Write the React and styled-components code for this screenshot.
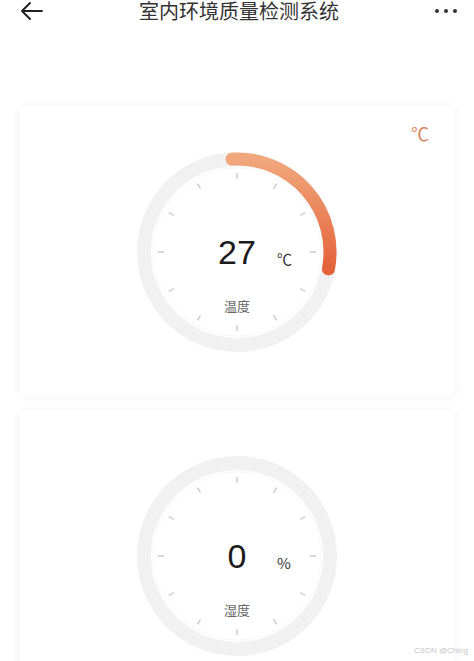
import styled, { createGlobalStyle } from "styled-components";

const GlobalStyle = createGlobalStyle`
  html, body {
    margin: 0;
    padding: 0;
    background: #fff;
    font-family: "Liberation Sans", "Noto Sans CJK SC", sans-serif;
  }
`;

const RADIUS = 93;
const CENTER = 105;

// 角度从正上方顺时针计算
function polar(deg) {
  const rad = ((deg - 90) * Math.PI) / 180;
  return [CENTER + RADIUS * Math.cos(rad), CENTER + RADIUS * Math.sin(rad)];
}

function arcPath(from, to) {
  const [x1, y1] = polar(from);
  const [x2, y2] = polar(to);
  const large = to - from > 180 ? 1 : 0;
  return `M ${x1} ${y1} A ${RADIUS} ${RADIUS} 0 ${large} 1 ${x2} ${y2}`;
}

function Ticks() {
  const ticks = [];
  for (let i = 0; i < 12; i++) {
    const rad = (i * 30 * Math.PI) / 180;
    const x1 = CENTER + 73 * Math.sin(rad);
    const y1 = CENTER - 73 * Math.cos(rad);
    const x2 = CENTER + 79 * Math.sin(rad);
    const y2 = CENTER - 79 * Math.cos(rad);
    ticks.push(<line key={i} x1={x1} y1={y1} x2={x2} y2={y2} stroke="#c8c8c8" strokeWidth="1.4" />);
  }
  return ticks;
}

function Gauge({ id, value, unit, label, endAngle }) {
  return (
    <GaugeBox>
      <svg width="210" height="210" viewBox="0 0 210 210">
        <defs>
          <linearGradient id={id} x1="0" y1="0" x2="0" y2="1">
            <stop offset="0%" stopColor="#f1a77c" />
            <stop offset="100%" stopColor="#e4623a" />
          </linearGradient>
        </defs>
        <circle cx={CENTER} cy={CENTER} r={RADIUS} fill="none" stroke="#f1f1f1" strokeWidth="14" />
        <circle cx={CENTER} cy={CENTER} r={84} fill="none" stroke="#f7f7f7" strokeWidth="1" />
        <Ticks />
        {endAngle != null && (
          <path d={arcPath(-3, endAngle)} fill="none" stroke={`url(#${id})`} strokeWidth="13" strokeLinecap="round" />
        )}
      </svg>
      <GaugeText>
        <ValueRow>
          <Value>{value}</Value>
          <Unit>{unit}</Unit>
        </ValueRow>
        <Label>{label}</Label>
      </GaugeText>
    </GaugeBox>
  );
}

function App() {
  return (
    <>
      <GlobalStyle />
      <Page>
        <Header>
          <BackIcon width="24" height="20" viewBox="0 0 24 20">
            <path d="M22 10 H2 M10 2 L2 10 L10 18" fill="none" stroke="#222" strokeWidth="2" strokeLinecap="round" strokeLinejoin="round" />
          </BackIcon>
          <Title>室内环境质量检测系统</Title>
          <MoreIcon width="24" height="6" viewBox="0 0 24 6">
            <circle cx="3" cy="3" r="2" fill="#333" />
            <circle cx="12" cy="3" r="2" fill="#333" />
            <circle cx="21" cy="3" r="2" fill="#333" />
          </MoreIcon>
        </Header>
        <Cards>
          <Card>
            <CornerUnit>℃</CornerUnit>
            <Gauge id="temp" value="27" unit="℃" label="温度" endAngle={100.5} />
          </Card>
          <Card>
            <Gauge id="hum" value="0" unit="%" label="湿度" />
          </Card>
        </Cards>
        <Watermark>CSDN @Ching</Watermark>
      </Page>
    </>
  );
}

const Page = styled.div`
  width: 474px;
  height: 661px;
  overflow: hidden;
  position: relative;
  background: #fff;
`;

const Header = styled.div`
  height: 22px;
  display: grid;
  grid-template-columns: 1fr auto 1fr;
  align-items: center;
  padding: 0 16px 0 20px;
`;

const BackIcon = styled.svg`
  display: block;
`;

const MoreIcon = styled.svg`
  display: block;
  justify-self: end;
`;

const Title = styled.div`
  font-family: "Noto Sans CJK SC", sans-serif;
  font-size: 20px;
  color: #333;
  line-height: 22px;
`;

const Cards = styled.div`
  display: flex;
  flex-direction: column;
  gap: 13px;
  padding: 84px 19px 0;
`;

const Card = styled.div`
  position: relative;
  height: 291px;
  background: #fff;
  border-radius: 8px;
  box-shadow: 0 0 8px rgba(0, 0, 0, 0.06);
  display: flex;
  align-items: center;
  justify-content: center;
`;

const CornerUnit = styled.div`
  position: absolute;
  top: 14px;
  right: 26px;
  font-family: "Noto Sans CJK SC", sans-serif;
  font-size: 18px;
  color: #d8845f;
`;

const GaugeBox = styled.div`
  display: grid;
  width: 210px;
  height: 210px;

  & > * {
    grid-area: 1 / 1;
  }
  svg {
    display: block;
  }
`;

const GaugeText = styled.div`
  display: flex;
  flex-direction: column;
  align-items: center;
  padding-top: 85px;
`;

const ValueRow = styled.div`
  position: relative;
  height: 40px;
  display: flex;
  justify-content: center;
`;

const Value = styled.span`
  font-size: 34px;
  line-height: 40px;
  color: #1a1a1a;
`;

const Unit = styled.span`
  position: absolute;
  left: calc(50% + 40px);
  top: 16px;
  font-family: "Noto Sans CJK SC", sans-serif;
  font-size: 15px;
  color: #333;
`;

const Label = styled.div`
  margin-top: 24px;
  font-family: "Noto Sans CJK SC", sans-serif;
  font-size: 13px;
  color: #666;
`;

const Watermark = styled.div`
  position: absolute;
  right: 6px;
  bottom: 6px;
  font-size: 8px;
  color: #c8c8c8;
`;

export default App;
